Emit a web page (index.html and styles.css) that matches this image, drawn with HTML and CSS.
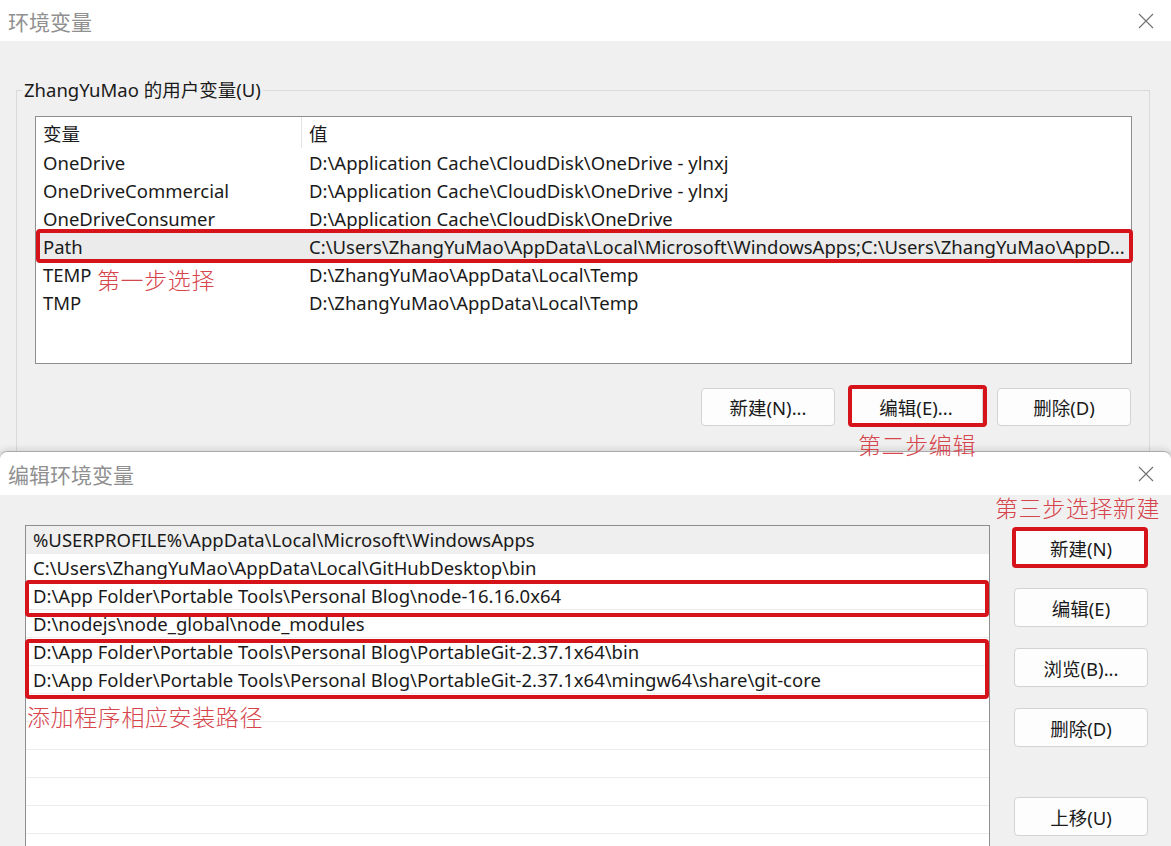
FILE: index.html
```html
<!DOCTYPE html>
<html lang="zh-CN">
<head>
  <meta charset="UTF-8" />
  <title>环境变量</title>
  <link rel="stylesheet" href="styles.css">
</head>
<body>
  <!-- 环境变量 window -->
  <div class="window env-window">
    <div class="titlebar">
      <span class="title">环境变量</span>
      <svg class="close" width="16" height="16" viewBox="0 0 16 16"><path d="M1 1L15 15M15 1L1 15" stroke="#707070" stroke-width="1.1" fill="none"/></svg>
    </div>
    <div class="env-body">
      <fieldset class="group">
        <legend>ZhangYuMao 的用户变量(U)</legend>
        <div class="var-list">
          <div class="var-row head"><span class="col-name">变量</span><span class="col-value">值</span></div>
          <div class="var-row"><span class="col-name">OneDrive</span><span class="col-value">D:\Application Cache\CloudDisk\OneDrive - ylnxj</span></div>
          <div class="var-row"><span class="col-name">OneDriveCommercial</span><span class="col-value">D:\Application Cache\CloudDisk\OneDrive - ylnxj</span></div>
          <div class="var-row"><span class="col-name">OneDriveConsumer</span><span class="col-value">D:\Application Cache\CloudDisk\OneDrive</span></div>
          <div class="var-row selected"><span class="col-name">Path</span><span class="col-value">C:\Users\ZhangYuMao\AppData\Local\Microsoft\WindowsApps;C:\Users\ZhangYuMao\AppD...</span></div>
          <div class="var-row"><span class="col-name">TEMP</span><span class="col-value">D:\ZhangYuMao\AppData\Local\Temp</span></div>
          <div class="var-row"><span class="col-name">TMP</span><span class="col-value">D:\ZhangYuMao\AppData\Local\Temp</span></div>
        </div>
        <div class="btn-row">
          <button class="btn">新建(N)...</button>
          <button class="btn">编辑(E)...</button>
          <button class="btn">删除(D)</button>
        </div>
      </fieldset>
    </div>
  </div>

  <!-- 编辑环境变量 window -->
  <div class="window edit-window">
    <div class="titlebar">
      <span class="title">编辑环境变量</span>
      <svg class="close" width="16" height="16" viewBox="0 0 16 16"><path d="M1 1L15 15M15 1L1 15" stroke="#707070" stroke-width="1.1" fill="none"/></svg>
    </div>
    <div class="edit-body">
      <div class="path-list">
        <div class="path-row selected">%USERPROFILE%\AppData\Local\Microsoft\WindowsApps</div>
        <div class="path-row">C:\Users\ZhangYuMao\AppData\Local\GitHubDesktop\bin</div>
        <div class="path-row">D:\App Folder\Portable Tools\Personal Blog\node-16.16.0x64</div>
        <div class="path-row">D:\nodejs\node_global\node_modules</div>
        <div class="path-row">D:\App Folder\Portable Tools\Personal Blog\PortableGit-2.37.1x64\bin</div>
        <div class="path-row">D:\App Folder\Portable Tools\Personal Blog\PortableGit-2.37.1x64\mingw64\share\git-core</div>
        <div class="path-row"></div>
        <div class="path-row"></div>
        <div class="path-row"></div>
        <div class="path-row"></div>
        <div class="path-row"></div>
        <div class="path-row"></div>
      </div>
      <div class="side-btns">
        <button class="btn">新建(N)</button>
        <button class="btn">编辑(E)</button>
        <button class="btn">浏览(B)...</button>
        <button class="btn">删除(D)</button>
        <button class="btn btn-up">上移(U)</button>
      </div>
    </div>
  </div>

  <!-- annotations -->
  <div class="mark mark-path"></div>
  <div class="mark mark-edit"></div>
  <div class="mark mark-new"></div>
  <div class="mark mark-node"></div>
  <div class="mark mark-git"></div>
  <div class="note note-1">第一步选择</div>
  <div class="note note-2">第二步编辑</div>
  <div class="note note-3">第三步选择新建</div>
  <div class="note note-4">添加程序相应安装路径</div>
</body>
</html>
```

FILE: styles.css
```css
body {
  margin: 0;
  width: 1171px;
  height: 846px;
  overflow: hidden;
  position: relative;
  background: #e6e6e6;
  font-family: "Noto Sans", "Noto Sans CJK SC", sans-serif;
  font-size: 18.5px;
  color: #1a1a1a;
}

.window {
  background: #f0f0f0;
  overflow: hidden;
  box-sizing: border-box;
}
.env-window {
  height: 451px;
}
.edit-window {
  height: 395px;
  border-top: 1px solid #a9a9a9;
  border-radius: 8px 8px 0 0;
  box-shadow: 0 -2px 6px rgba(0, 0, 0, 0.12);
}

.titlebar {
  background: #fff;
  display: flex;
  align-items: center;
  justify-content: space-between;
  padding: 0 17px 0 8px;
}
.env-window .titlebar { height: 41px; }
.edit-window .titlebar { height: 43px; }
.title {
  font-size: 21px;
  color: #909090;
}

/* top window */
.env-body {
  padding: 37px 21px 0 16px;
}
.group {
  margin: 0;
  padding: 0 0 40px 0;
  border: 1px solid #dadada;
}
.group legend {
  margin-left: 5px;
  padding: 0 2px;
  line-height: 24px;
}
.var-list {
  margin: 14px 17px 0 18px;
  height: 248px;
  box-sizing: border-box;
  border: 1px solid #8e8e8e;
  background: #fff;
}
.var-row {
  display: flex;
  align-items: center;
  height: 28px;
}
.var-row.head {
  height: 31px;
  align-items: stretch;
}
.col-name {
  width: 266px;
  flex: none;
  padding-left: 7px;
  box-sizing: border-box;
}
.head .col-name {
  border-right: 1px solid #e3e3e3;
  display: flex;
  align-items: center;
}
.head .col-value {
  display: flex;
  align-items: center;
}
.col-value {
  flex: 1;
  padding-left: 7px;
  white-space: nowrap;
  overflow: hidden;
}
.var-row.selected {
  background: #ebebeb;
}

.btn-row {
  display: flex;
  justify-content: flex-end;
  gap: 14px;
  margin: 24px 18px 0 0;
}
.btn {
  width: 134px;
  height: 38px;
  padding: 0;
  background: #fdfdfd;
  border: 1px solid #d2d2d2;
  border-radius: 4px;
  font: inherit;
  color: #1a1a1a;
}

/* edit window */
.edit-body {
  display: flex;
  gap: 24px;
  padding: 30px 23px 0 25px;
}
.path-list {
  width: 965px;
  height: 340px;
  flex: none;
  box-sizing: border-box;
  border: 1px solid #8e8e8e;
  background: #fff;
}
.path-row {
  height: 28px;
  box-sizing: border-box;
  border-bottom: 1px solid #ededed;
  padding-left: 7px;
  display: flex;
  align-items: center;
  white-space: nowrap;
}
.path-row.selected {
  background: #efefef;
}
.side-btns {
  display: flex;
  flex-direction: column;
  gap: 21px;
  padding-top: 3px;
}
.side-btns .btn {
  height: 39px;
}
.side-btns .btn-up {
  margin-top: 29px;
}

/* red annotations */
.mark {
  position: absolute;
  box-sizing: border-box;
  border: 4px solid #d6121b;
  border-radius: 4px;
}
.mark-path { left: 36px; top: 229px; width: 1097px; height: 34px; }
.mark-edit { left: 848px; top: 385px; width: 139px; height: 42px; }
.mark-new { left: 1012px; top: 527px; width: 136px; height: 41px; }
.mark-node { left: 25px; top: 580px; width: 964px; height: 37px; }
.mark-git { left: 25px; top: 639px; width: 964px; height: 60px; }

.note {
  position: absolute;
  font-family: "Noto Sans CJK SC", sans-serif;
  font-weight: 300;
  font-size: 23px;
  letter-spacing: 0.6px;
  line-height: 1;
  color: #d6444c;
  white-space: nowrap;
}
.note-1 { left: 97px; top: 268px; }
.note-2 { left: 858px; top: 433px; }
.note-3 { left: 995px; top: 496px; }
.note-4 { left: 27px; top: 705px; }
```
